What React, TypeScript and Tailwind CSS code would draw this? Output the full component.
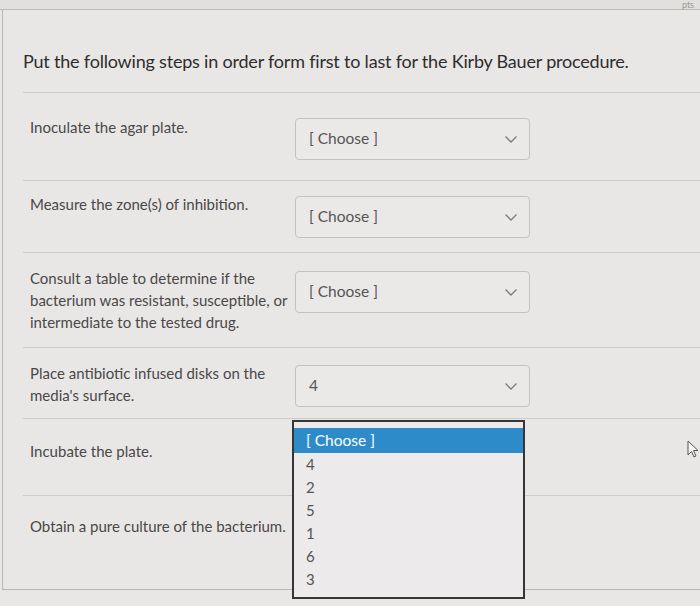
import React from 'react';

const rows = [
  { text: 'Inoculate the agar plate.', value: '[ Choose ]', h: 'h-[88px]', tp: 'pt-[23px]', sp: 'mt-[25px]' },
  { text: 'Measure the zone(s) of inhibition.', value: '[ Choose ]', h: 'h-[72px]', tp: 'pt-[12px]', sp: 'mt-[15px]' },
  {
    text: 'Consult a table to determine if the bacterium was resistant, susceptible, or intermediate to the tested drug.',
    value: '[ Choose ]',
    h: 'h-[95px]',
    tp: 'pt-[14px]',
    sp: 'mt-[18px]',
  },
  { text: "Place antibiotic infused disks on the media's surface.", value: '4', h: 'h-[71px]', tp: 'pt-[14px]', sp: 'mt-[17px]' },
  { text: 'Incubate the plate.', value: null, h: 'h-[77px]', tp: 'pt-[21px]', sp: '' },
  { text: 'Obtain a pure culture of the bacterium.', value: null, h: 'h-[95px]', tp: 'pt-[19px]', sp: '' },
];

const options = ['4', '2', '5', '1', '6', '3'];

const Chevron = () => (
  <svg width="14" height="9" viewBox="0 0 14 9" fill="none" className="text-[#7b7b7b]">
    <path d="M1.5 1.5 L7 7 L12.5 1.5" stroke="currentColor" strokeWidth="1.3" />
  </svg>
);

export default function App() {
  return (
    <div className="relative w-[700px] h-[606px] overflow-hidden bg-[#e9e7e6] font-['Lato','Liberation_Sans',sans-serif] text-[#4a4848]">
      {/* top strip of the previous card */}
      <div className="h-[10px] border-b border-[#bdbab8] bg-[#e2e0df]" />

      <div className="ml-[2px] w-[720px] h-[580px] border-l border-b border-[#b9b6b4]">
        <div className="pl-[20px] pt-[40px] h-[82px] text-[18px] leading-[22px] tracking-[-0.2px] text-[#2f2d2c]">
          Put the following steps in order form first to last for the Kirby Bauer procedure.
        </div>

        <div className="ml-[20px]">
          {rows.map((r, i) => (
            <div key={i} className={`flex items-start border-t border-[#cdcac8] ${r.h}`}>
              <div className={`w-[272px] pl-[7px] pr-[2px] text-[15px] leading-[22px] ${r.tp}`}>{r.text}</div>
              {r.value !== null && (
                <div
                  className={`flex items-center justify-between w-[235px] h-[42px] pl-[13px] pr-[11px] rounded-[4px] border border-[#c4c1bf] bg-[#ebe9e8] text-[15.5px] text-[#555] ${r.sp}`}
                >
                  <span>{r.value}</span>
                  <Chevron />
                </div>
              )}
            </div>
          ))}
        </div>
      </div>

      {/* open dropdown list */}
      <div className="absolute left-[292px] top-[420px] w-[233px] h-[179px] border-2 border-[#363636] bg-[#eceaea] pt-[6px]">
        <div className="h-[25px] bg-[#2e8bc9] px-[12px] text-[15.5px] leading-[25px] text-white">[ Choose ]</div>
        {options.map((o) => (
          <div key={o} className="h-[23px] px-[12px] text-[15px] leading-[23px] text-[#555]">
            {o}
          </div>
        ))}
      </div>

      {/* mouse cursor */}
      <svg className="absolute left-[687px] top-[440px]" width="12" height="20" viewBox="0 0 12 20">
        <path d="M1 1 L1 15 L4.5 11.5 L7 17 L9 16 L6.5 10.5 L11 10.5 Z" fill="#f4f4f4" stroke="#555" strokeWidth="1" />
      </svg>

      <div className="absolute right-[6px] top-0 text-[9px] leading-[10px] text-[#9a9796]">pts</div>
    </div>
  );
}
